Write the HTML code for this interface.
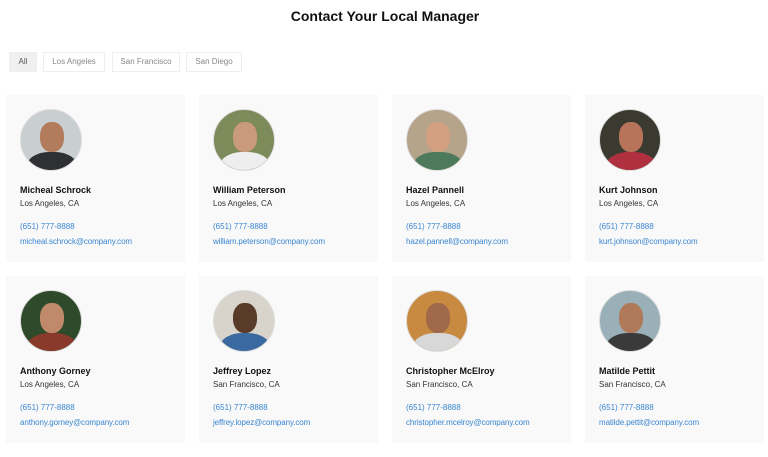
<!DOCTYPE html>
<html><head><style>
*{margin:0;padding:0;box-sizing:border-box}
body{width:768px;height:457px;background:#fff;font-family:"Liberation Sans",sans-serif;position:relative;overflow:hidden}
h1{position:absolute;top:8px;left:0;width:770px;text-align:center;font-size:14px;font-weight:bold;color:#111}
.f{position:absolute;top:52px;height:20px;border:1px solid #eee;font-size:8px;color:#888;line-height:18px;text-align:center}
.card{position:absolute;width:179px;height:167px;background:#f9f9f9}
.av{position:absolute;left:14px;top:14px;width:62px;height:62px;border-radius:50%;overflow:hidden;border:1px solid #ddd}
.av .h{position:absolute;left:19px;top:12px;width:24px;height:30px;border-radius:45%;background:#c08a6a}
.av .b{position:absolute;left:6px;top:42px;width:50px;height:30px;border-radius:45% 45% 0 0}
.n{position:absolute;left:14px;top:90px;font-size:9px;font-weight:bold;color:#111}
.l{position:absolute;left:14px;top:104px;font-size:8px;color:#333}
.p{position:absolute;left:14px;top:127px;font-size:8px;color:#3a86d0}
.e{position:absolute;left:14px;top:142px;font-size:8px;color:#3a86d0;letter-spacing:-0.1px}
</style></head><body>
<h1>Contact Your Local Manager</h1>
<div class="f" style="left:9px;width:28px;background:#f0f0f0;color:#555">All</div>
<div class="f" style="left:43px;width:62px">Los Angeles</div>
<div class="f" style="left:112px;width:68px">San Francisco</div>
<div class="f" style="left:186px;width:56px">San Diego</div>

<div class="card" style="left:6px;top:95px"><div class="av" style="background:#c9ced1"><div class="h" style="background:#b27c5c"></div><div class="b" style="background:#2e3033"></div></div><div class="n">Micheal Schrock</div><div class="l">Los Angeles, CA</div><div class="p">(651) 777-8888</div><div class="e">micheal.schrock@company.com</div></div>
<div class="card" style="left:199px;top:95px"><div class="av" style="background:#7d8a5a"><div class="h" style="background:#c99a7c"></div><div class="b" style="background:#eee"></div></div><div class="n">William Peterson</div><div class="l">Los Angeles, CA</div><div class="p">(651) 777-8888</div><div class="e">william.peterson@company.com</div></div>
<div class="card" style="left:392px;top:95px"><div class="av" style="background:#b5a48a"><div class="h" style="background:#d2a080"></div><div class="b" style="background:#4d7a5a"></div></div><div class="n">Hazel Pannell</div><div class="l">Los Angeles, CA</div><div class="p">(651) 777-8888</div><div class="e">hazel.pannell@company.com</div></div>
<div class="card" style="left:585px;top:95px"><div class="av" style="background:#3a3a30"><div class="h" style="background:#b8745a"></div><div class="b" style="background:#b03040"></div></div><div class="n">Kurt Johnson</div><div class="l">Los Angeles, CA</div><div class="p">(651) 777-8888</div><div class="e">kurt.johnson@company.com</div></div>

<div class="card" style="left:6px;top:276px"><div class="av" style="background:#2f4a2a"><div class="h" style="background:#c08a6a"></div><div class="b" style="background:#8a3a2a"></div></div><div class="n">Anthony Gorney</div><div class="l">Los Angeles, CA</div><div class="p">(651) 777-8888</div><div class="e">anthony.gorney@company.com</div></div>
<div class="card" style="left:199px;top:276px"><div class="av" style="background:#d8d4cc"><div class="h" style="background:#5a3a28"></div><div class="b" style="background:#3a6aa0"></div></div><div class="n">Jeffrey Lopez</div><div class="l">San Francisco, CA</div><div class="p">(651) 777-8888</div><div class="e">jeffrey.lopez@company.com</div></div>
<div class="card" style="left:392px;top:276px"><div class="av" style="background:#c88a40"><div class="h" style="background:#a06a4a"></div><div class="b" style="background:#d8d8d8"></div></div><div class="n">Christopher McElroy</div><div class="l">San Francisco, CA</div><div class="p">(651) 777-8888</div><div class="e">christopher.mcelroy@company.com</div></div>
<div class="card" style="left:585px;top:276px"><div class="av" style="background:#9ab0b8"><div class="h" style="background:#b07a5a"></div><div class="b" style="background:#3a3a3a"></div></div><div class="n">Matilde Pettit</div><div class="l">San Francisco, CA</div><div class="p">(651) 777-8888</div><div class="e">matilde.pettit@company.com</div></div>
</body></html>
